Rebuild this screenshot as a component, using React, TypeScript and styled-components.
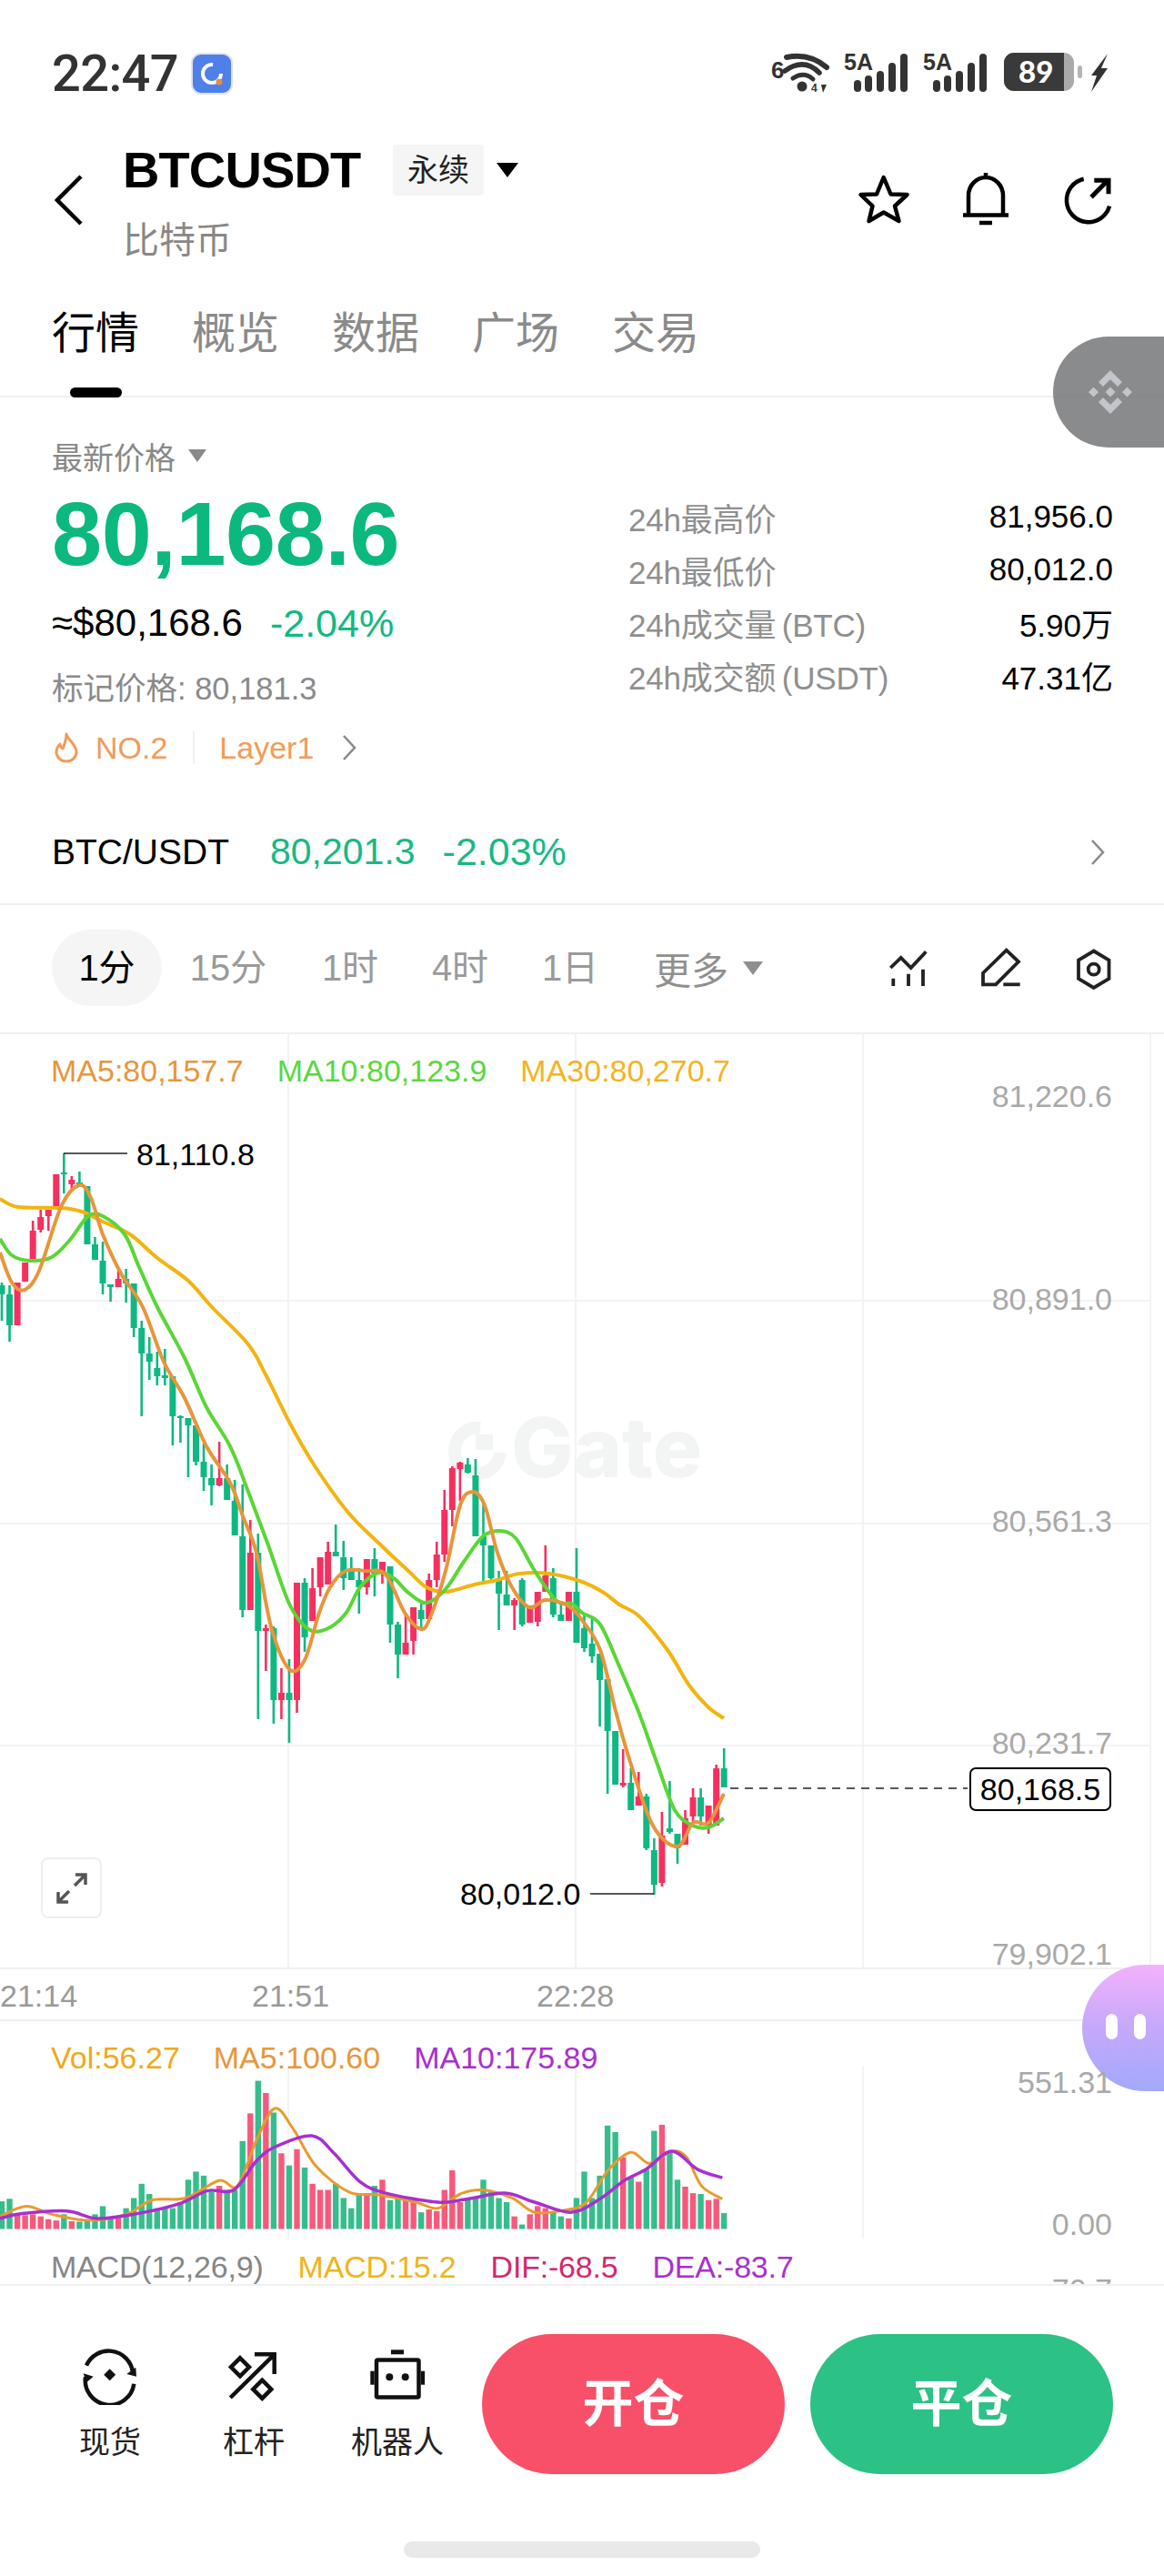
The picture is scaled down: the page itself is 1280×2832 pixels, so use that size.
import React from "react";
import styled, { createGlobalStyle } from "styled-components";

const FONT = `"Liberation Sans", "Noto Sans CJK SC", sans-serif`;
const UP = "#f5305f";
const DOWN = "#0fb882";

const Global = createGlobalStyle`
  html, body { margin: 0; padding: 0; background: #fff; }
  * { box-sizing: border-box; }
`;

const Page = styled.div`
  position: relative;
  width: 1280px;
  height: 2832px;
  overflow: hidden;
  background: #fff;
  font-family: ${FONT};
  color: #000;
`;

/* ---------- status bar ---------- */
const StatusBar = styled.div`
  height: 150px;
  padding: 50px 56px 0 57px;
  display: flex;
  align-items: flex-start;
  justify-content: space-between;
`;
const StatusLeft = styled.div`
  display: flex;
  align-items: center;
  gap: 14px;
  height: 46px;
  margin-top: 8px;
`;
const Clock = styled.div`
  font-family: "Roboto", ${FONT};
  font-weight: 500;
  font-size: 56px;
  line-height: 42px;
  color: #333;
  letter-spacing: -0.6px;
`;
const AppIcon = styled.svg`
  width: 46px;
  height: 46px;
`;
const StatusRight = styled.svg`
  width: 376px;
  height: 56px;
`;
const BatteryText = styled.text`
  font-family: "Lato", ${FONT};
  font-weight: 900;
  font-size: 33px;
  fill: #fff;
`;
const SigText = styled.text<{ $s: number }>`
  font-family: ${FONT};
  font-weight: 700;
  font-size: ${(p) => p.$s}px;
  fill: #333;
`;

/* ---------- header ---------- */
const Header = styled.div`
  height: 150px;
  padding: 0 55px 0 60px;
  display: flex;
  align-items: flex-start;
`;
const BackIcon = styled.svg`
  width: 34px;
  height: 56px;
  margin-top: 42px;
  margin-right: 41px;
`;
const TitleCol = styled.div`
  flex: 1;
  display: flex;
  flex-direction: column;
`;
const TitleRow = styled.div`
  display: flex;
  align-items: center;
  height: 68px;
  margin-top: 3px;
`;
const Title = styled.div`
  font-size: 56px;
  font-weight: 700;
  letter-spacing: -0.9px;
  line-height: 68px;
  width: 297px;
`;
const Tag = styled.div`
  width: 100px;
  height: 56px;
  border-radius: 4px;
  background: #f5f5f5;
  font-size: 34px;
  line-height: 56px;
  text-align: center;
  color: #222;
`;
const Caret = styled.div<{ $w: number; $h: number; $c: string }>`
  width: 0;
  height: 0;
  border-left: ${(p) => p.$w / 2}px solid transparent;
  border-right: ${(p) => p.$w / 2}px solid transparent;
  border-top: ${(p) => p.$h}px solid ${(p) => p.$c};
`;
const TitleCaret = styled(Caret)`
  margin-left: 14px;
`;
const Subtitle = styled.div`
  font-size: 40px;
  line-height: 48px;
  color: #888;
  margin-top: 19px;
`;
const Actions = styled.div`
  display: flex;
  gap: 52px;
  margin-top: 39px;
`;
const HeadIcon = styled.svg`
  width: 60px;
  height: 60px;
`;

/* ---------- tabs ---------- */
const Tabs = styled.div`
  height: 137px;
  padding: 39px 0 0 57px;
  display: flex;
  gap: 58px;
  border-bottom: 2px solid #f0f0f0;
`;
const Tab = styled.div`
  width: 96px;
  display: flex;
  flex-direction: column;
  align-items: center;
  justify-content: space-between;
  height: 98px;
`;
const TabLabel = styled.div<{ $on?: boolean }>`
  font-size: 48px;
  line-height: 56px;
  white-space: nowrap;
  color: ${(p) => (p.$on ? "#000" : "#8a8a8a")};
`;
const TabBar = styled.div`
  width: 57px;
  height: 11px;
  border-radius: 6px;
  background: #000;
`;

/* ---------- summary ---------- */
const Summary = styled.div`
  display: grid;
  grid-template-columns: 634px 533px;
  padding-left: 57px;
`;
const Left = styled.div`
  height: 443px;
  padding-top: 45px;
`;
const PriceKind = styled.div`
  display: flex;
  align-items: center;
  gap: 14px;
  height: 38px;
  font-size: 34px;
  color: #888;
`;
const BigPrice = styled.div`
  margin-top: 17px;
  font-size: 99px;
  line-height: 100px;
  font-weight: 700;
  letter-spacing: -0.4px;
  color: #0bb87e;
`;
const SubRow = styled.div`
  margin-top: 23px;
  height: 50px;
  display: flex;
  align-items: center;
  gap: 30px;
  font-size: 42px;
`;
const Change = styled.span`
  color: #10b981;
  font-size: 43px;
`;
const Mark = styled.div`
  margin-top: 27px;
  height: 40px;
  line-height: 40px;
  font-size: 34.5px;
  color: #8a8a8a;
`;
const TagRow = styled.div`
  margin-top: 25px;
  height: 40px;
  display: flex;
  align-items: center;
  color: #f29b58;
  font-size: 34px;
`;
const Flame = styled.svg`
  width: 32px;
  height: 34px;
  margin-right: 16px;
`;
const Vr = styled.div`
  width: 2px;
  height: 36px;
  background: #f1f1f1;
  margin: 0 27px 0 28px;
`;
const SmallChevron = styled.svg`
  width: 18px;
  height: 30px;
  margin-left: 30px;
`;
const Stats = styled.div`
  padding-top: 102px;
`;
const StatRow = styled.div`
  height: 58px;
  display: flex;
  align-items: center;
  justify-content: space-between;
  font-size: 35px;
`;
const StatLabel = styled.span`
  color: #8f8f8f;
  word-spacing: -3px;
  letter-spacing: -0.2px;
`;

/* ---------- spot row ---------- */
const SpotRow = styled.div`
  height: 115px;
  padding: 0 64px 0 57px;
  display: flex;
  align-items: center;
  font-size: 41px;
  border-bottom: 2px solid #f0f0f0;
`;
const SpotName = styled.span`
  width: 240px;
  font-size: 39px;
`;
const SpotValue = styled.span`
  color: #18b984;
  margin-right: 30px;
`;
const SpotChange = styled(SpotValue)`
  font-size: 43px;
`;
const SpotChevron = styled.svg`
  width: 18px;
  height: 30px;
  margin-left: auto;
`;

/* ---------- time frames ---------- */
const Frames = styled.div`
  height: 142px;
  padding: 27px 54px 0 57px;
  display: flex;
  align-items: flex-start;
  border-bottom: 2px solid #f0f0f0;
`;
const Frame = styled.div<{ $on?: boolean; $w: number }>`
  width: ${(p) => p.$w}px;
  height: 84px;
  line-height: 84px;
  border-radius: 42px;
  text-align: center;
  font-size: 40px;
  color: ${(p) => (p.$on ? "#000" : "#9a9a9a")};
  background: ${(p) => (p.$on ? "#f5f5f5" : "transparent")};
  white-space: nowrap;
`;
const More = styled.div`
  display: flex;
  align-items: center;
  gap: 16px;
  height: 84px;
  font-size: 41px;
  color: #8f8f8f;
  margin-left: 31px;
`;
const FrameTools = styled.div`
  margin-left: auto;
  display: flex;
  gap: 56px;
  height: 84px;
  align-items: center;
`;
const ToolIcon = styled.svg`
  width: 46px;
  height: 48px;
`;

/* ---------- chart ---------- */
const ChartPanel = styled.div`
  position: relative;
  height: 1026px;
`;
const ChartSvg = styled.svg`
  position: absolute;
  left: 0;
  top: 0;
  width: 1280px;
  height: 1026px;
`;
const WatermarkText = styled.text`
  font-family: "Inter", ${FONT};
  font-weight: 800;
  font-size: 91px;
  fill: #f3f4f4;
`;
const LegendRow = styled.div<{ $gap: number }>`
  position: relative;
  display: flex;
  gap: ${(p) => p.$gap}px;
  padding-left: 56px;
  font-size: 34px;
  white-space: nowrap;
`;
const MainLegend = styled(LegendRow)`
  padding-top: 19px;
  line-height: 42px;
`;
const Legend = styled.span<{ $c: string }>`
  color: ${(p) => p.$c};
`;
const AxisLabel = styled.div<{ $y: number }>`
  position: absolute;
  right: 57px;
  top: ${(p) => p.$y - 20}px;
  line-height: 40px;
  font-size: 34px;
  color: #a9a9a9;
`;
const ExtremeLabel = styled.div<{ $x: number; $y: number }>`
  position: absolute;
  left: ${(p) => p.$x}px;
  top: ${(p) => p.$y - 20}px;
  line-height: 40px;
  font-size: 34px;
  color: #000;
`;
const PriceBox = styled.div`
  position: absolute;
  left: 1066px;
  top: 806px;
  width: 156px;
  height: 48px;
  border: 2px solid #000;
  border-radius: 7px;
  background: #fff;
  font-size: 34px;
  line-height: 44px;
  text-align: center;
`;
const ExpandButton = styled.div`
  position: absolute;
  left: 45px;
  top: 905px;
  width: 67px;
  height: 67px;
  border: 2px solid #eee;
  border-radius: 8px;
  background: #fff;
  display: flex;
  align-items: center;
  justify-content: center;
`;
const ExpandIcon = styled.svg`
  width: 36px;
  height: 36px;
`;

/* ---------- time axis ---------- */
const TimeAxis = styled.div`
  height: 59px;
  border-top: 2px solid #f0f0f0;
  border-bottom: 2px solid #f0f0f0;
  display: grid;
  grid-template-columns: 277px 313px 1fr;
  font-size: 34px;
  line-height: 58px;
  color: #9a9a9a;
`;

/* ---------- volume ---------- */
const VolumePanel = styled.div`
  position: relative;
  z-index: 1;
  height: 289px;
  overflow: hidden;
`;
const VolSvg = styled.svg`
  position: absolute;
  left: 0;
  top: 0;
  width: 1280px;
  height: 289px;
`;
const VolLegend = styled(LegendRow)`
  padding-top: 20px;
  line-height: 40px;
`;
const MacdLegend = styled(LegendRow)`
  margin-top: 190px;
  line-height: 40px;
  letter-spacing: -0.2px;
`;

/* ---------- bottom bar ---------- */
const BottomBar = styled.div`
  height: 321px;
  border-top: 2px solid #f0f0f0;
  padding: 53px 56px 0 0;
  display: flex;
  align-items: flex-start;
`;
const Tools = styled.div`
  width: 530px;
  display: grid;
  grid-template-columns: repeat(3, 120px);
  column-gap: 38px;
  padding-left: 61px;
  padding-top: 14px;
`;
const ToolItem = styled.div`
  display: flex;
  flex-direction: column;
  align-items: center;
`;
const BarIcon = styled.svg`
  width: 64px;
  height: 64px;
`;
const ToolLabel = styled.div`
  margin-top: 21px;
  font-size: 34px;
  line-height: 40px;
  color: #222;
  white-space: nowrap;
`;
const Buttons = styled.div`
  display: flex;
  gap: 28px;
`;
const ActionButton = styled.div<{ $bg: string }>`
  width: 333px;
  height: 154px;
  border-radius: 77px;
  background: ${(p) => p.$bg};
  color: #fff;
  font-size: 56px;
  font-weight: 700;
  line-height: 154px;
  text-align: center;
`;
const HomeBar = styled.div`
  position: absolute;
  left: 444px;
  top: 2794px;
  width: 392px;
  height: 18px;
  border-radius: 9px;
  background: #e9e9e9;
`;

/* ---------- floats ---------- */
const BinanceFloat = styled.div`
  position: absolute;
  right: 0;
  top: 370px;
  width: 122px;
  height: 122px;
  border-radius: 61px 0 0 61px;
  background: rgba(108, 110, 111, 0.8);
  display: flex;
  align-items: center;
  padding-left: 38px;
`;
const BinanceIcon = styled.svg`
  width: 50px;
  height: 50px;
`;
const Bubble = styled.div`
  position: absolute;
  right: 0;
  top: 2160px;
  width: 90px;
  height: 139px;
  border-radius: 70px 0 0 70px;
  background: linear-gradient(180deg, #f3b2fc 0%, #c5a8fb 50%, #a3a9fb 100%);
  display: flex;
  gap: 18px;
  padding: 54px 0 0 26px;
`;
const BubbleEye = styled.div`
  width: 13px;
  height: 28px;
  border-radius: 7px;
  background: #fff;
`;

/* ---------- chart data ---------- */
type C = [string, number, number, number, number];
const candles: C[] = [
  ["d",1410,1452,1413,1423],["d",1413,1475,1423,1457],["u",1410,1457,1410,1457],["u",1388,1409,1388,1409],
  ["u",1342,1385,1353,1385],["u",1330,1355,1338,1352],["u",1330,1353,1330,1337],["u",1291,1327,1291,1327],
  ["d",1268,1312,1289,1291],["u",1293,1308,1297,1302],["d",1288,1303,1300,1303],["d",1304,1368,1304,1368],
  ["d",1360,1385,1368,1385],["d",1365,1423,1386,1411],["d",1412,1431,1412,1415],["u",1397,1415,1406,1415],
  ["d",1395,1432,1406,1411],["d",1411,1470,1411,1460],["d",1452,1557,1460,1488],["d",1470,1517,1488,1497],
  ["d",1486,1523,1504,1513],["d",1483,1523,1512,1515],["d",1513,1589,1513,1557],["d",1556,1586,1557,1559],
  ["d",1559,1624,1559,1567],["d",1567,1611,1567,1607],["d",1587,1639,1607,1624],["d",1610,1655,1625,1633],
  ["u",1585,1634,1625,1633],["d",1610,1649,1625,1649],["d",1627,1688,1650,1688],["d",1632,1778,1689,1770],
  ["u",1671,1770,1707,1770],["d",1686,1890,1707,1793],["u",1786,1837,1790,1793],["d",1788,1895,1790,1869],
  ["u",1834,1890,1861,1869],["d",1824,1916,1861,1869],["u",1740,1883,1740,1869],["d",1735,1816,1740,1800],
  ["u",1724,1782,1746,1782],["u",1712,1755,1712,1745],["u",1695,1742,1706,1742],["d",1676,1711,1706,1711],
  ["d",1694,1748,1712,1735],["d",1712,1737,1724,1737],["d",1724,1774,1737,1745],["u",1714,1753,1714,1745],
  ["d",1702,1755,1714,1730],["u",1717,1741,1717,1730],["d",1722,1806,1722,1786],["d",1783,1845,1786,1819],
  ["u",1773,1819,1806,1819],["u",1767,1819,1767,1804],["d",1763,1791,1770,1780],["u",1730,1783,1737,1780],
  ["u",1695,1745,1709,1737],["u",1638,1717,1660,1709],["u",1612,1678,1614,1660],["u",1607,1650,1608,1615],
  ["d",1603,1620,1610,1619],["d",1604,1689,1622,1689],["d",1653,1741,1689,1699],["d",1699,1737,1699,1735],
  ["d",1727,1792,1735,1752],["d",1727,1765,1753,1765],["u",1757,1792,1759,1765],["d",1735,1788,1737,1786],
  ["u",1765,1784,1765,1784],["u",1750,1788,1750,1783],["u",1699,1750,1732,1750],["d",1724,1778,1735,1775],
  ["d",1760,1782,1775,1782],["u",1750,1782,1750,1782],["d",1702,1806,1750,1806],["d",1775,1816,1790,1812],
  ["d",1777,1828,1807,1821],["d",1818,1898,1818,1847],["d",1846,1972,1846,1903],["d",1903,1962,1903,1962],
  ["u",1923,1965,1960,1963],["d",1944,1990,1960,1990],["u",1948,1985,1975,1985],["d",1972,2034,1975,2032],
  ["d",2021,2083,2034,2072],["u",1992,2074,2018,2070],["d",1958,2016,2010,2014],["d",2016,2049,2016,2032],
  ["u",1990,2028,1999,2028],["u",1966,2004,1976,1997],["d",1966,2007,1976,1997],["u",1985,2016,1985,2007],
  ["u",1940,2007,1944,2007],["d",1922,1965,1944,1965],
];

const PITCH = 8.54;
const cx = (i: number) => 2 + PITCH * i;

type P = [number, number];
const smooth = (pts: P[]) => {
  let d = `M${pts[0][0]} ${pts[0][1]}`;
  for (let i = 0; i < pts.length - 1; i++) {
    const p0 = pts[Math.max(i - 1, 0)];
    const p1 = pts[i];
    const p2 = pts[i + 1];
    const p3 = pts[Math.min(i + 2, pts.length - 1)];
    const c1x = p1[0] + (p2[0] - p0[0]) / 6;
    const c1y = p1[1] + (p2[1] - p0[1]) / 6;
    const c2x = p2[0] - (p3[0] - p1[0]) / 6;
    const c2y = p2[1] - (p3[1] - p1[1]) / 6;
    d += ` C${c1x.toFixed(1)} ${c1y.toFixed(1)} ${c2x.toFixed(1)} ${c2y.toFixed(1)} ${p2[0]} ${p2[1]}`;
  }
  return d;
};

const ma30: P[] = [[0,1318],[20,1327],[67,1328],[90,1332],[113,1343],[143,1357],[173,1383],[207,1408],[233,1437],[273,1478],[293,1513],[320,1567],[347,1613],[383,1663],[417,1697],[449,1727],[469,1745],[490,1750],[522,1742],[547,1737],[571,1730],[604,1730],[640,1739],[664,1751],[681,1764],[703,1777],[734,1814],[758,1853],[779,1877],[796,1889]];
const ma10: P[] = [[0,1362],[13,1380],[33,1386],[57,1382],[77,1363],[97,1337],[113,1337],[137,1357],[153,1393],[173,1437],[203,1493],[227,1547],[253,1590],[273,1640],[294,1696],[318,1763],[339,1791],[359,1791],[380,1774],[396,1745],[416,1729],[433,1735],[449,1751],[469,1762],[490,1747],[510,1717],[531,1689],[549,1683],[567,1691],[588,1727],[612,1760],[629,1763],[640,1773],[660,1786],[681,1832],[703,1884],[722,1937],[742,1990],[762,2007],[779,2009],[796,1999]];
const ma5: P[] = [[0,1377],[13,1410],[27,1418],[43,1397],[67,1327],[87,1303],[100,1317],[113,1357],[133,1400],[157,1437],[180,1497],[203,1537],[227,1590],[253,1630],[267,1667],[282,1707],[298,1788],[318,1835],[335,1825],[351,1773],[363,1745],[380,1727],[402,1727],[424,1731],[445,1773],[463,1791],[473,1778],[490,1727],[506,1655],[520,1640],[533,1655],[547,1707],[563,1745],[582,1767],[600,1759],[624,1765],[640,1781],[660,1814],[677,1881],[693,1937],[718,2007],[745,2030],[762,2004],[779,2004],[796,1972]];

const volTops = [648,642,680,682,680,685,692,695,680,697,698,695,680,660,690,685,665,640,605,630,665,665,665,650,595,575,585,625,610,620,620,500,432,352,382,430,530,560,520,565,605,620,620,605,640,665,630,630,610,595,645,640,640,645,675,668,672,620,572,650,640,640,595,625,640,650,685,705,680,660,665,675,685,690,640,575,640,585,462,478,540,590,600,570,475,460,525,595,612,628,630,645,642,677];
const volY = (py: number) => py / 2.234 + 2130 - 2222;
const volPts = (a: P[]): P[] => a.map(([x, y]) => [+(x / 1.225).toFixed(1), +volY(y).toFixed(1)]);
const volMa5 = volPts([[0,685],[35,660],[70,680],[120,695],[170,680],[205,645],[250,640],[295,597],[320,610],[345,500],[370,420],[395,470],[425,560],[470,625],[510,632],[560,650],[590,665],[620,630],[650,620],[690,640],[720,675],[760,670],[790,650],[820,570],[850,528],[875,555],[905,525],[925,540],[945,610],[973,642]]);
const volMa10 = volPts([[0,690],[30,678],[90,672],[130,690],[180,680],[240,655],[280,622],[315,620],[345,550],[370,515],[420,487],[450,530],[485,600],[520,628],[590,650],[630,642],[680,628],[720,650],[770,675],[810,640],[840,598],[870,570],[905,525],[940,570],[973,590]]);

const GRID = "#f3f3f3";
const axisLabels: [string, number][] = [["81,220.6",68],["80,891.0",291],["80,561.3",535],["80,231.7",779],["79,902.1",1011]];

export default function App() {
  return (
    <Page>
      <Global />
      <StatusBar>
        <StatusLeft>
          <Clock>22:47</Clock>
          <AppIcon viewBox="0 0 46 46">
            <rect x="1" y="1" width="44" height="44" rx="10" fill="#4f7fe8" stroke="#dfe3ea" strokeWidth="2" />
            <circle cx="23" cy="23" r="10" fill="none" stroke="#fff" strokeWidth="4" strokeDasharray="48 15" />
            <circle cx="31" cy="32" r="3.5" fill="#e0913c" />
          </AppIcon>
        </StatusLeft>
        <StatusRight viewBox="850 50 376 56">
          <SigText $s={26} x="850" y="86">6</SigText>
          <g fill="none" stroke="#333" strokeLinecap="round">
            <path d="M867 63 Q892 58 911 74" strokeWidth="6" />
            <path d="M865 78 Q886 63 903 80" strokeWidth="5.5" />
            <path d="M874 86 Q886 78 896 87" strokeWidth="5" />
          </g>
          <circle cx="884" cy="95" r="5.5" fill="#333" />
          <SigText $s={12} x="894" y="101">4</SigText>
          <path d="M905 93l6 0-4 9z" fill="#333" />
          <SigText $s={25} x="930" y="77">5A</SigText>
          <g fill="#333">
            <rect x="941" y="88" width="8" height="13" rx="4" />
            <rect x="953" y="83" width="8" height="18" rx="4" />
            <rect x="966" y="78" width="8" height="23" rx="4" />
            <rect x="979" y="69" width="8" height="32" rx="4" />
            <rect x="992" y="59" width="8" height="42" rx="4" />
          </g>
          <SigText $s={25} x="1017" y="77">5A</SigText>
          <g fill="#333">
            <rect x="1028" y="88" width="8" height="13" rx="4" />
            <rect x="1040" y="83" width="8" height="18" rx="4" />
            <rect x="1053" y="78" width="8" height="23" rx="4" />
            <rect x="1066" y="69" width="8" height="32" rx="4" />
            <rect x="1079" y="59" width="8" height="42" rx="4" />
          </g>
          <rect x="1106" y="58" width="77" height="42" rx="11" fill="#aaa" />
          <path d="M1117 58H1172V100H1117a11 11 0 0 1-11-11V69a11 11 0 0 1 11-11z" fill="#3a3a3a" />
          <BatteryText x="1122" y="91">89</BatteryText>
          <rect x="1187" y="72" width="5" height="14" rx="2.5" fill="#b5b5b5" />
          <path d="M1220 59L1202 83h6l-6 18 18-26h-7z" fill="#333" />
        </StatusRight>
      </StatusBar>

      <Header>
        <BackIcon viewBox="0 0 34 56">
          <path d="M29 2L3 28l26 26" fill="none" stroke="#000" strokeWidth="4.5" />
        </BackIcon>
        <TitleCol>
          <TitleRow>
            <Title>BTCUSDT</Title>
            <Tag>永续</Tag>
            <TitleCaret $w={25} $h={16} $c="#000" />
          </TitleRow>
          <Subtitle>比特币</Subtitle>
        </TitleCol>
        <Actions>
          <HeadIcon viewBox="0 0 60 60">
            <path d="M30.700 6L38.500 24.500L56.500 25L43 37.500L47.500 54L30.700 44.500L14.500 54L18.500 37.500L5.500 25L23 24.500Z" fill="none" stroke="#000" strokeWidth="4.500" strokeLinejoin="round" />
          </HeadIcon>
          <HeadIcon viewBox="0 0 60 60">
            <path d="M31 1v5M12 47V26a19 20 0 0 1 38 0v21M6 47.500h50M24 56h14" fill="none" stroke="#000" strokeWidth="4.500" />
          </HeadIcon>
          <HeadIcon viewBox="0 0 60 60">
            <path d="M26.700 7.700A24 24 0 1 0 55 37.700" fill="none" stroke="#000" strokeWidth="4.500" />
            <path d="M35 27.700L52 10.500" fill="none" stroke="#000" strokeWidth="5" />
            <path d="M38.300 9.300H54V24.300" fill="none" stroke="#000" strokeWidth="5" />
          </HeadIcon>
        </Actions>
      </Header>

      <Tabs>
        <Tab><TabLabel $on>行情</TabLabel><TabBar /></Tab>
        <Tab><TabLabel>概览</TabLabel></Tab>
        <Tab><TabLabel>数据</TabLabel></Tab>
        <Tab><TabLabel>广场</TabLabel></Tab>
        <Tab><TabLabel>交易</TabLabel></Tab>
      </Tabs>

      <Summary>
        <Left>
          <PriceKind>最新价格<Caret $w={21} $h={14} $c="#8a8a8a" /></PriceKind>
          <BigPrice>80,168.6</BigPrice>
          <SubRow><span>≈$80,168.6</span><Change>-2.04%</Change></SubRow>
          <Mark>标记价格: 80,181.3</Mark>
          <TagRow>
            <Flame viewBox="0 0 32 34">
              <path d="M16 2c1 6 11 11 11 20a11 10 0 0 1-22 0c0-4 2-7 4-9 0 3 1 4 3 5 2-5 4-10 4-16z" fill="none" stroke="#f29b58" strokeWidth="3" strokeLinejoin="round" />
            </Flame>
            NO.2<Vr />Layer1
            <SmallChevron viewBox="0 0 18 30"><path d="M3 2l12 13L3 28" fill="none" stroke="#888" strokeWidth="2.5" /></SmallChevron>
          </TagRow>
        </Left>
        <Stats>
          <StatRow><StatLabel>24h最高价</StatLabel><span>81,956.0</span></StatRow>
          <StatRow><StatLabel>24h最低价</StatLabel><span>80,012.0</span></StatRow>
          <StatRow><StatLabel>24h成交量 (BTC)</StatLabel><span>5.90万</span></StatRow>
          <StatRow><StatLabel>24h成交额 (USDT)</StatLabel><span>47.31亿</span></StatRow>
        </Stats>
      </Summary>

      <SpotRow>
        <SpotName>BTC/USDT</SpotName>
        <SpotValue>80,201.3</SpotValue>
        <SpotChange>-2.03%</SpotChange>
        <SpotChevron viewBox="0 0 18 30"><path d="M3 2l12 13L3 28" fill="none" stroke="#888" strokeWidth="2.5" /></SpotChevron>
      </SpotRow>

      <Frames>
        <Frame $on $w={121}>1分</Frame>
        <Frame $w={146}>15分</Frame>
        <Frame $w={122}>1时</Frame>
        <Frame $w={120}>4时</Frame>
        <Frame $w={122}>1日</Frame>
        <More>更多<Caret $w={22} $h={15} $c="#8f8f8f" /></More>
        <FrameTools>
          <ToolIcon viewBox="0 0 46 48">
            <path d="M3.300 24L14.700 13L25.700 24L42.300 6.300" fill="none" stroke="#222" strokeWidth="3.800" />
            <path d="M6.300 35.700V44M23 30.700V44M39 25.700V44" fill="none" stroke="#222" strokeWidth="3.800" />
          </ToolIcon>
          <ToolIcon viewBox="0 0 46 48">
            <path d="M28.700 4.700L42 17.300L17 42.300H3V29.700z" fill="none" stroke="#222" strokeWidth="3.800" />
            <path d="M25.300 42.300H43.700" fill="none" stroke="#222" strokeWidth="3.800" />
          </ToolIcon>
          <ToolIcon viewBox="0 0 46 48">
            <path d="M22.700 5.500L39.500 15.500V36L22.700 46L6 36V15.500z" fill="none" stroke="#222" strokeWidth="3.800" />
            <circle cx="22.700" cy="25.700" r="6" fill="none" stroke="#222" strokeWidth="3.800" />
          </ToolIcon>
        </FrameTools>
      </Frames>

      <ChartPanel>
        <ChartSvg viewBox="0 1137 1280 1026">
          <g stroke={GRID} strokeWidth="2">
            <path d="M0 1430H1265M0 1675H1265M0 1919H1265" />
            <path d="M317 1137V2163M633 1137V2163M949 1137V2163M1265 1137V2163" />
          </g>
          <path d="M528 1570A25 25 0 1 0 550 1597" fill="none" stroke="#f3f4f4" strokeWidth="14" />
          <rect x="523" y="1577" width="19" height="17" fill="#f3f4f4" />
          <WatermarkText x="562" y="1624">Gate</WatermarkText>
          {candles.map(([k, wt, wb, bt, bb], i) => {
            const c = k === "u" ? UP : DOWN;
            const x = cx(i);
            return (
              <g key={i} fill={c}>
                <rect x={x - 1.3} y={wt} width={2.6} height={wb - wt} />
                <rect x={x - 3.5} y={bt} width={7} height={Math.max(bb - bt, 2)} />
              </g>
            );
          })}
          <path d={smooth(ma30)} fill="none" stroke="#f2b411" strokeWidth="4" />
          <path d={smooth(ma10)} fill="none" stroke="#5ad636" strokeWidth="4" />
          <path d={smooth(ma5)} fill="none" stroke="#e8953a" strokeWidth="4" />
          <path d="M70 1268H140M649 2082H719" fill="none" stroke="#222" strokeWidth="1.500" />
          <path d="M803 1966H1064" fill="none" stroke="#222" strokeWidth="1.500" strokeDasharray="9 7" />
        </ChartSvg>
        <MainLegend $gap={37}>
          <Legend $c="#e8963a">MA5:80,157.7</Legend>
          <Legend $c="#5ad83e">MA10:80,123.9</Legend>
          <Legend $c="#f4b41e">MA30:80,270.7</Legend>
        </MainLegend>
        {axisLabels.map(([t, y]) => (
          <AxisLabel key={t} $y={y}>{t}</AxisLabel>
        ))}
        <ExtremeLabel $x={150} $y={132}>81,110.8</ExtremeLabel>
        <ExtremeLabel $x={506} $y={945}>80,012.0</ExtremeLabel>
        <PriceBox>80,168.5</PriceBox>
        <ExpandButton>
          <ExpandIcon viewBox="0 0 36 36">
            <path d="M21 15L32 4M22 3h11v11M15 21L4 32M14 33H3V22" fill="none" stroke="#555" strokeWidth="3.500" />
          </ExpandIcon>
        </ExpandButton>
      </ChartPanel>

      <TimeAxis>
        <span>21:14</span>
        <span>21:51</span>
        <span>22:28</span>
      </TimeAxis>

      <VolumePanel>
        <VolSvg viewBox="0 0 1280 289">
          <g stroke={GRID} strokeWidth="2">
            <path d="M317 49V239M633 49V239M949 49V239" />
          </g>
          {volTops.map((py, i) => {
            const t = volY(py);
            return (
              <rect
                key={i}
                x={cx(i) - 3.2}
                y={t}
                width={6.4}
                height={228.500 - t}
                fill={candles[i][0] === "u" ? "#f7597b" : "#36bd8c"}
              />
            );
          })}
          <path d={smooth(volMa5)} fill="none" stroke="#ea9a2c" strokeWidth="3" />
          <path d={smooth(volMa10)} fill="none" stroke="#a92fd0" strokeWidth="3.500" />
        </VolSvg>
        <VolLegend $gap={37}>
          <Legend $c="#f0a818">Vol:56.27</Legend>
          <Legend $c="#e8963a">MA5:100.60</Legend>
          <Legend $c="#a92fd0">MA10:175.89</Legend>
        </VolLegend>
        <AxisLabel $y={67}>551.31</AxisLabel>
        <AxisLabel $y={223}>0.00</AxisLabel>
        <AxisLabel $y={295}>70.7</AxisLabel>
        <MacdLegend $gap={38}>
          <Legend $c="#868686">MACD(12,26,9)</Legend>
          <Legend $c="#f0b418">MACD:15.2</Legend>
          <Legend $c="#d6266e">DIF:-68.5</Legend>
          <Legend $c="#a92fd0">DEA:-83.7</Legend>
        </MacdLegend>
      </VolumePanel>

      <BottomBar>
        <Tools>
          <ToolItem>
            <BarIcon viewBox="0 0 64 64">
              <path d="M6 20.700A26.700 26.700 0 0 1 57 28M5 33.300A26.700 26.700 0 0 0 58.300 40.700" fill="none" stroke="#111" strokeWidth="4.500" />
              <path d="M61 32.700L50.300 30L60.300 22.700zM2.700 29.300L13.700 32.700L6 39.300z" fill="#111" />
              <path d="M31.700 24.200l6.500 6.500-6.500 6.500-6.500-6.500z" fill="#111" />
            </BarIcon>
            <ToolLabel>现货</ToolLabel>
          </ToolItem>
          <ToolItem>
            <BarIcon viewBox="0 0 64 64">
              <path d="M6.300 56L54.700 8.300M33 8.300H54.700V30" fill="none" stroke="#111" strokeWidth="4.500" />
              <path d="M17 12.300l10 10-10 10-10-10zM41.300 36.700l10 10-10 10-10-10z" fill="#fff" stroke="#111" strokeWidth="4.500" />
            </BarIcon>
            <ToolLabel>杠杆</ToolLabel>
          </ToolItem>
          <ToolItem>
            <BarIcon viewBox="0 0 64 64">
              <path d="M25 3.300h14v5H25z" fill="#111" />
              <rect x="9" y="14.500" width="46.500" height="41" rx="1.500" fill="none" stroke="#111" strokeWidth="4.500" />
              <rect x="2.300" y="26.700" width="4.400" height="15" fill="#111" />
              <rect x="57.700" y="26.700" width="4.400" height="15" fill="#111" />
              <circle cx="23.300" cy="33.300" r="4" fill="#111" />
              <circle cx="40.700" cy="33.300" r="4" fill="#111" />
            </BarIcon>
            <ToolLabel>机器人</ToolLabel>
          </ToolItem>
        </Tools>
        <Buttons>
          <ActionButton $bg="#f85068">开仓</ActionButton>
          <ActionButton $bg="#2cc185">平仓</ActionButton>
        </Buttons>
      </BottomBar>

      <HomeBar />
      <BinanceFloat>
        <BinanceIcon viewBox="0 0 50 50">
          <path fill="#c2c5c9" d="M25 1l13 13-5 5-8-8-8 8-5-5zM25 49L12 36l5-5 8 8 8-8 5 5zM1 25l5.500-5.500L12 25l-5.500 5.500zM38 25l5.500-5.500L49 25l-5.500 5.500zM25 19.500l5.500 5.500-5.500 5.500-5.500-5.500z" />
        </BinanceIcon>
      </BinanceFloat>
      <Bubble><BubbleEye /><BubbleEye /></Bubble>
    </Page>
  );
}
